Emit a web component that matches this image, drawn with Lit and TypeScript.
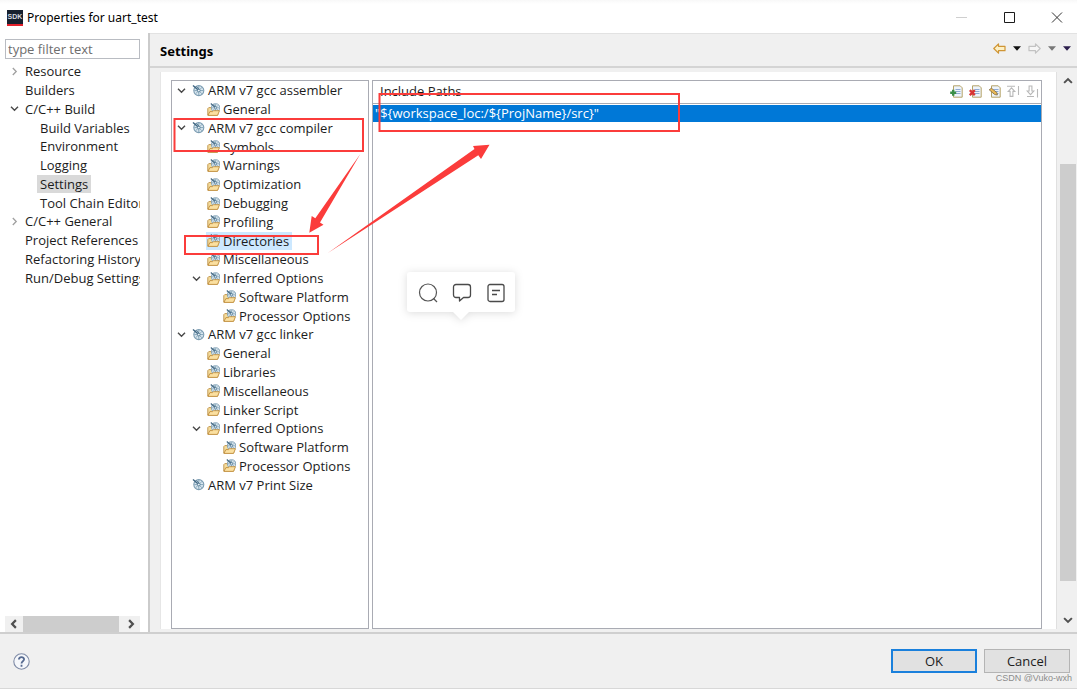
import { LitElement, html, css, svg, nothing } from "lit";
import { customElement, property, state } from "lit/decorators.js";
import { classMap } from "lit/directives/class-map.js";

type Icon = "tool" | "folder" | "";
interface Row {
  label: string;
  level: number;
  icon?: Icon;
  open?: boolean;
  closed?: boolean;
  selected?: boolean;
}

const PAGES: Row[] = [
  { label: "Resource", level: 0, closed: true },
  { label: "Builders", level: 0 },
  { label: "C/C++ Build", level: 0, open: true },
  { label: "Build Variables", level: 1 },
  { label: "Environment", level: 1 },
  { label: "Logging", level: 1 },
  { label: "Settings", level: 1, selected: true },
  { label: "Tool Chain Editor", level: 1 },
  { label: "C/C++ General", level: 0, closed: true },
  { label: "Project References", level: 0 },
  { label: "Refactoring History", level: 0 },
  { label: "Run/Debug Settings", level: 0 },
];

const tool = (label: string, open = true): Row => ({ label, level: 0, icon: "tool", open });
const leaf = (label: string, level = 1, selected = false): Row => ({ label, level, icon: "folder", selected });
const group = (label: string): Row => ({ label, level: 1, icon: "folder", open: true });

const OPTIONS: Row[] = [
  tool("ARM v7 gcc assembler"),
  leaf("General"),
  tool("ARM v7 gcc compiler"),
  leaf("Symbols"),
  leaf("Warnings"),
  leaf("Optimization"),
  leaf("Debugging"),
  leaf("Profiling"),
  leaf("Directories", 1, true),
  leaf("Miscellaneous"),
  group("Inferred Options"),
  leaf("Software Platform", 2),
  leaf("Processor Options", 2),
  tool("ARM v7 gcc linker"),
  leaf("General"),
  leaf("Libraries"),
  leaf("Miscellaneous"),
  leaf("Linker Script"),
  group("Inferred Options"),
  leaf("Software Platform", 2),
  leaf("Processor Options", 2),
  tool("ARM v7 Print Size", false),
];

const gear = svg`
  <circle cx="6.8" cy="6.6" r="5" fill="#dbe8f0" stroke="#7d9db2" stroke-width="1.1"/>
  <path d="M6.8 2.2v8.8M2.4 6.6h8.8M3.7 3.5l6.2 6.2M9.9 3.5L3.7 9.7" stroke="#6f93ab" stroke-width="0.8"/>
  <path d="M1 1.4l5.8 5.2" stroke="#3f6580" stroke-width="1.4"/>
  <path d="M4.5 2.4l3 3.2" stroke="#4d728b" stroke-width="0.9"/>
  <circle cx="6.8" cy="6.6" r="1.3" fill="#f2f7fa" stroke="#4d7690" stroke-width="0.8"/>`;

const toolIcon = html`<svg width="13" height="13" viewBox="0 0 13 13" fill="none" aria-hidden="true">${gear}</svg>`;

const folderIcon = html`<svg width="13" height="13" viewBox="0 0 13 13" fill="none" aria-hidden="true">
  <path d="M.8 12V5.6l1-1h2.6l1 1.2h5.4V12z" fill="#f5dc9c" stroke="#bd9148" stroke-width="0.9"/>
  <g transform="translate(3 -0.6) scale(0.82)">${gear}</g>
  <path d="M.9 12.4l2-3.8h2.6l1-.9h6l-2 4.7z" fill="#fbe0a0" stroke="#c08d3d" stroke-width="0.9" stroke-linejoin="round"/>
</svg>`;

const chevron = (d: string, color: string, size = 9, w = 1.4) => html`<svg
  width=${size} height=${size} viewBox="0 0 9 9" fill="none" stroke=${color} stroke-width=${w} aria-hidden="true"
><path d=${d} /></svg>`;
const DOWN = "M1 2.8l3.5 3.4L8 2.8";
const RIGHT = "M2.8 1l3.4 3.5L2.8 8";
const LEFT = "M6.2 1L2.8 4.5 6.2 8";
const UP = "M1 6.2l3.5-3.4L8 6.2";

@customElement("option-tree")
class OptionTree extends LitElement {
  @property({ attribute: false }) rows: Row[] = [];
  @property() label = "";
  static styles = css`
    :host {
      display: block;
      overflow: hidden;
    }
    .tree {
      display: grid;
      grid-auto-rows: 1fr;
      height: 100%;
    }
    .row {
      display: flex;
      align-items: center;
      white-space: nowrap;
      min-height: 0;
    }
    .level-1 {
      padding-left: 15px;
    }
    .level-2 {
      padding-left: 31px;
    }
    .twisty {
      flex: none;
      width: 14px;
      display: flex;
    }
    .item {
      display: flex;
      align-items: center;
      gap: 3px;
      line-height: 18px;
      padding: 0 3px 0 1px;
    }
    .plain {
      padding: 0 3px;
      margin-left: -2px;
    }
    .item svg {
      flex: none;
    }
    .selected {
      background: #cce8ff;
    }
    .plain.selected {
      background: #d9d9d9;
    }
  `;
  render() {
    return html`<div class="tree" role="tree" aria-label=${this.label}>
      ${this.rows.map(
        (r) => html`<div
          class="row level-${r.level}"
          role="treeitem"
          aria-level=${r.level + 1}
          aria-selected=${r.selected ? "true" : "false"}
          aria-expanded=${r.open ? "true" : r.closed ? "false" : nothing}
        >
          <span class="twisty"
            >${r.open ? chevron(DOWN, "#484848") : r.closed ? chevron(RIGHT, "#a0a0a0", 9, 1.3) : nothing}</span
          >
          <span class=${classMap({ item: true, plain: !r.icon, selected: !!r.selected })}
            >${r.icon === "tool" ? toolIcon : r.icon === "folder" ? folderIcon : nothing}<span>${r.label}</span></span
          >
        </div>`
      )}
    </div>`;
  }
}

const page = svg`<path d="M3.5 .8h6.7l2 2v9.400H3.500z" fill="#eef4fb" stroke="#b5a368" stroke-width="1"/>
  <path d="M5.500 4.500h5M5.500 6.500h5M5.500 8.500h5" stroke="#8fabd4" stroke-width="1"/>`;

const EDIT_ICONS: { label: string; art: unknown }[] = [
  { label: "Add", art: svg`${page}<path d="M3.2 4.700v6M.2 7.700h6" stroke="#3a8f48" stroke-width="2.400"/>` },
  {
    label: "Delete",
    art: svg`${page}<path d="M.8 5.200l5 5M5.800 5.200l-5 5" stroke="#d93535" stroke-width="2.400"/>`,
  },
  {
    label: "Edit",
    art: svg`${page}<path d="M1.200 4.800l2.200-1.600 5.400 4.300.6 2.500-2.600-.4z" fill="#e9b957" stroke="#7f6840" stroke-width="0.8"/>`,
  },
  {
    label: "Move up",
    art: svg`<path d="M0 1.200h8M4.500 2.800L1.200 6.400h1.900v5h2.800v-5h1.900zM11.500 1v9" stroke="#b8b8b8" stroke-width="1.100"/>`,
  },
  {
    label: "Move down",
    art: svg`<path d="M3.100 1h2.800v5h1.900L4.500 9.600 1.200 6h1.900zM1 11.500h7M11.500 4v8.500" stroke="#b8b8b8" stroke-width="1.100"/>`,
  },
];

@customElement("app-root")
class AppRoot extends LitElement {
  @state() private filter = "";

  static styles = css`
    :host {
      display: flex;
      flex-direction: column;
      position: relative;
      height: 100vh;
      overflow: hidden;
      box-sizing: border-box;
      background: #fff;
      color: #1c1c1c;
      font: 13px/18px "Open Sans", "Noto Sans", sans-serif;
    }
    * {
      box-sizing: border-box;
    }
    button {
      font: inherit;
      color: inherit;
      background: none;
      border: 0;
      padding: 0;
      display: flex;
      align-items: center;
      justify-content: center;
    }
    svg {
      display: block;
      flex: none;
    }
    .titlebar {
      flex: none;
      height: 33px;
      display: flex;
      align-items: center;
      gap: 4px;
      padding: 3px 7px 0;
      color: #000;
      background: linear-gradient(#f8f8f8, #fff 4px);
    }
    .logo {
      width: 16px;
      height: 16px;
      background: #17202f;
      border-bottom: 2px solid #e3202b;
      color: #d4d8df;
      font: bold 7px/14px "Liberation Sans", sans-serif;
      text-align: center;
    }
    .title {
      flex: 1;
      font: 12px/18px "Noto Sans", sans-serif;
      margin: 0;
    }
    .window {
      display: flex;
      gap: 35px;
      padding-right: 7px;
    }
    .main {
      flex: 1;
      min-height: 0;
      display: flex;
    }
    .side {
      width: 150px;
      flex: none;
      display: flex;
      flex-direction: column;
      padding: 6px 8px 0 5px;
      border-right: 2px solid #cbcbcb;
    }
    .filter {
      width: 100%;
      height: 20px;
      border: 1px solid #b9bcc2;
      padding: 0 2px;
      font: inherit;
      outline: 0;
    }
    .filter::placeholder {
      color: #6e6e6e;
      opacity: 1;
    }
    .pages {
      height: 225px;
      margin-top: 3px;
      padding-left: 5px;
    }
    .hscroll {
      margin-top: auto;
      height: 16px;
      display: flex;
      background: #f0f0f0;
    }
    .hscroll button {
      width: 18px;
    }
    .hthumb {
      flex: 1;
      background: #cdcdcd;
      margin-right: 3px;
    }
    .content {
      flex: 1;
      min-width: 0;
      display: flex;
      flex-direction: column;
      background: #f0f0f0;
      border-top: 1px solid #e2e2e2;
    }
    .heading {
      height: 34px;
      flex: none;
      display: flex;
      align-items: center;
      padding: 1px 6px 0 10px;
      border-bottom: 2px solid #d4d4d4;
    }
    .heading h2 {
      font: bold 13px/18px "Noto Sans", sans-serif;
      color: #000;
      margin: 0;
      flex: 1;
    }
    .nav {
      display: flex;
      align-items: center;
      gap: 7px;
      padding-bottom: 4px;
    }
    .body {
      flex: 1;
      min-height: 0;
      display: flex;
      padding: 4px 0 3px 10px;
    }
    .sheet {
      flex: 1;
      min-width: 0;
      display: flex;
      gap: 3px;
      background: #fff;
      border-left: 1px solid #e6e6e6;
      border-right: 1px solid #e0e0e0;
      padding: 8px 14px 0 10px;
    }
    .options {
      width: 198px;
      flex: none;
      border: 1px solid #a9abb3;
      padding: 0 5px;
    }
    .options option-tree {
      height: 413px;
    }
    .paths {
      flex: 1;
      min-width: 0;
      border: 1px solid #a9abb3;
      display: flex;
      flex-direction: column;
    }
    .paths-head {
      height: 23px;
      flex: none;
      display: flex;
      align-items: center;
      padding: 0 2px 2px 7px;
      border-bottom: 1px solid #a9abb3;
    }
    .paths-head h3 {
      flex: 1;
      font: inherit;
      margin: 0;
    }
    .tools {
      display: flex;
      gap: 6px;
    }
    .list {
      list-style: none;
      margin: 0;
      padding: 1px 0 0;
    }
    .entry {
      background: #0078d7;
      color: #fff;
      line-height: 17px;
      padding-left: 2px;
      white-space: nowrap;
    }
    .vscroll {
      width: 20px;
      flex: none;
      display: flex;
      flex-direction: column;
      padding: 0 1px 0 3px;
    }
    .vscroll button {
      height: 18px;
    }
    .vthumb {
      background: #cdcdcd;
      height: 417px;
      margin-top: 74px;
      flex: 0 1 auto;
    }
    .vend {
      margin-top: auto;
    }
    .footer {
      height: 57px;
      flex: none;
      display: flex;
      align-items: center;
      gap: 7px;
      background: #f0f0f0;
      border-top: 2px solid #cfcfcf;
      border-bottom: 1px solid #d8d8d8;
      padding: 0 7px 0 13px;
    }
    .help {
      margin-right: auto;
    }
    .action {
      width: 86px;
      height: 24px;
      background: #e1e1e1;
      border: 1px solid #b4b4b4;
    }
    .primary {
      border: 2px solid #1a80dc;
    }
    .marks {
      position: absolute;
      left: 0;
      top: 0;
      pointer-events: none;
    }
    .bubble {
      position: absolute;
      left: 407px;
      top: 272px;
      width: 108px;
      height: 40px;
      display: flex;
      align-items: center;
      justify-content: center;
      gap: 14px;
      padding: 2px 0 0 2px;
      background: #fff;
      border-radius: 3px;
      filter: drop-shadow(0 1px 4px rgba(0, 0, 0, 0.14));
    }
    .bubble::after {
      content: "";
      position: absolute;
      top: 100%;
      left: 46px;
      border: 8px solid transparent;
      border-top-color: #fff;
      border-bottom: 0;
    }
    .credit {
      position: absolute;
      right: 5px;
      bottom: 5px;
      color: #8c8c8c;
      font: 9px/12px "Liberation Sans", sans-serif;
    }
  `;

  private arrow(color: string, fill: string, flip = false) {
    return html`<svg width="13" height="11" viewBox="0 0 13 11" aria-hidden="true">
      <path
        d="M.8 5.5L5.500 .8v2.500h6.500v4.400H5.500v2.500z"
        transform=${flip ? "translate(13 0) scale(-1 1)" : nothing}
        fill=${fill}
        stroke=${color}
        stroke-width="1.2"
        stroke-linejoin="round"
      />
    </svg>`;
  }

  private caret(color: string) {
    return html`<svg width="8" height="5" viewBox="0 0 8 5" aria-hidden="true">
      <path d="M0 .3h8L4 4.7z" fill=${color} />
    </svg>`;
  }

  render() {
    return html`
      <header class="titlebar">
        <span class="logo">SDK</span>
        <h1 class="title">Properties for uart_test</h1>
        <div class="window">
          <button aria-label="Minimize">
            <svg width="15" height="12" viewBox="0 0 15 12"><path d="M2 5.500h11" stroke="#cfcfcf" /></svg>
          </button>
          <button aria-label="Maximize">
            <svg width="12" height="12" viewBox="0 0 12 12" fill="none">
              <path d="M.5 .5h10v10H.5z" stroke="#1b1b1b" />
            </svg>
          </button>
          <button aria-label="Close">
            <svg width="12" height="12" viewBox="0 0 12 12"><path d="M1 .5l10 10M11 .5L1 10.500" stroke="#333" /></svg>
          </button>
        </div>
      </header>
      <div class="main">
        <nav class="side">
          <input
            class="filter"
            aria-label="Filter pages"
            placeholder="type filter text"
            .value=${this.filter}
            @input=${(e: InputEvent) => (this.filter = (e.target as HTMLInputElement).value)}
          />
          <option-tree class="pages" label="Pages" .rows=${PAGES}></option-tree>
          <div class="hscroll">
            <button aria-label="Scroll left">${chevron(LEFT, "#505050", 10, 2)}</button>
            <div class="hthumb"></div>
            <button aria-label="Scroll right">${chevron(RIGHT, "#505050", 10, 2)}</button>
          </div>
        </nav>
        <section class="content">
          <div class="heading">
            <h2>Settings</h2>
            <div class="nav">
              <button aria-label="Back">${this.arrow("#cf9534", "#fdf0c4")}</button>
              <button aria-label="Back history">${this.caret("#111")}</button>
              <button aria-label="Forward">${this.arrow("#c2c2c2", "#f6f6f6", true)}</button>
              <button aria-label="Forward history">${this.caret("#777")}</button>
              <button aria-label="View menu">${this.caret("#2c1f4d")}</button>
            </div>
          </div>
          <div class="body">
            <div class="sheet">
              <div class="options">
                <option-tree label="Tool options" .rows=${OPTIONS}></option-tree>
              </div>
              <div class="paths">
                <div class="paths-head">
                  <h3>Include Paths</h3>
                  <div class="tools">
                    ${EDIT_ICONS.map(
                      (i) => html`<button aria-label=${i.label}>
                        <svg width="13" height="13" viewBox="0 0 13 13" fill="none">${i.art}</svg>
                      </button>`
                    )}
                  </div>
                </div>
                <ul class="list">
                  <li class="entry">"\${workspace_loc:/\${ProjName}/src}"</li>
                </ul>
              </div>
            </div>
            <div class="vscroll">
              <button aria-label="Scroll up">${chevron(UP, "#505050", 10, 1.8)}</button>
              <div class="vthumb"></div>
              <button class="vend" aria-label="Scroll down">${chevron(DOWN, "#505050", 10, 1.8)}</button>
            </div>
          </div>
        </section>
      </div>
      <footer class="footer">
        <button class="help" aria-label="Help">
          <svg width="17" height="17" viewBox="0 0 17 17" fill="none">
            <circle cx="8.5" cy="8.5" r="7.7" fill="#f5f7fb" stroke="#7f8ba6" stroke-width="1.1" />
            <path
              d="M5.9 6.6c0-3.3 5.2-3.2 5.2-.3 0 1.9-2.6 1.9-2.6 4.1M8.5 11.8v1.9"
              stroke="#566a90"
              stroke-width="1.8"
            />
          </svg>
        </button>
        <button class="action primary">OK</button>
        <button class="action">Cancel</button>
      </footer>
      <svg class="marks" width="700" height="270" viewBox="0 0 700 270" aria-hidden="true">
        <g fill="none" stroke="#fb3c3b" stroke-width="2">
          <path d="M174.5 119H363v32H174.5zM185 236h133v18H185zM379.5 94H679v37H379.5z" />
        </g>
        <g fill="#fb3c3b">
          <path d="M360.3 154L320 222.5l3.5 2.2-14.2 8L311.700 216l3.600 2.300z" />
          <path d="M327.5 253.2L474.5 149l-1.500-3 16.500-1.300L481 159l-2.700-3.700z" />
        </g>
      </svg>
      <div class="bubble">
        <button aria-label="Search">
          <svg width="20" height="20" viewBox="0 0 20 20" fill="none" stroke="#555" stroke-width="1.2">
            <circle cx="10" cy="9.5" r="8.5" />
            <path d="M15.500 15.500l3.500 3.500" />
          </svg>
        </button>
        <button aria-label="Comment">
          <svg width="20" height="20" viewBox="0 0 20 20" fill="none" stroke="#4a4a4a" stroke-width="1.3" stroke-linejoin="round">
            <path d="M4 1.5h12a2.5 2.5 0 0 1 2.5 2.5v8a2.5 2.5 0 0 1-2.5 2.5h-4.500L7.5 18v-3.500H4A2.5 2.5 0 0 1 1.5 12V4A2.5 2.5 0 0 1 4 1.5z" />
          </svg>
        </button>
        <button aria-label="Note">
          <svg width="20" height="20" viewBox="0 0 20 20" fill="none" stroke="#4a4a4a" stroke-width="1.3">
            <rect x="2" y="1.5" width="16" height="17" rx="2" />
            <path d="M6 7.5h8M6 11.5h5" />
          </svg>
        </button>
      </div>
      <span class="credit">CSDN @Vuko-wxh</span>
    `;
  }
}
